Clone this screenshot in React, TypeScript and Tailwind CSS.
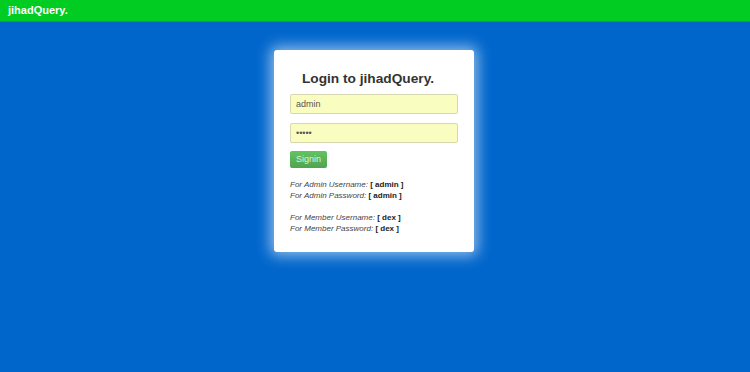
export default function App() {
  return (
    <div className="min-h-[372px] bg-[#0066cc] font-['Liberation_Sans',Arial,sans-serif]">
      <header className="flex h-[22px] items-center border-b border-[#1a9a3a] bg-[#00cc22] px-2">
        <span className="text-[11px] font-bold text-white">jihadQuery.</span>
      </header>

      <div className="flex justify-center pt-[28px] pr-[2px]">
        <div className="w-[200px] rounded-[3px] bg-white px-4 pb-[18px] pt-[20px] shadow-[0_0_14px_4px_rgba(255,255,255,0.55)]">
          <h1 className="pr-[12px] text-center text-[13.7px] font-bold leading-[17px] text-[#333]">
            Login to jihadQuery.
          </h1>
          <form className="mt-[7px] flex flex-col">
            <input
              type="text"
              defaultValue="admin"
              className="h-[20px] w-full rounded-[2px] border border-[#d8d8b0] bg-[#fafdc0] px-[5px] text-[9px] text-[#555] outline-none"
            />
            <input
              type="password"
              defaultValue="admin"
              className="mt-[9px] h-[20px] w-full rounded-[2px] border border-[#d8d8b0] bg-[#fafdc0] px-[5px] text-[9px] text-[#555] outline-none"
            />
            <button
              type="button"
              className="mt-[8px] h-[17px] w-[37px] rounded-[2px] bg-gradient-to-b from-[#62c462] to-[#51a351] text-[9px] text-[#dff0df]"
            >
              Signin
            </button>
          </form>
          <div className="mt-[11px] text-[8px] leading-[11px] text-[#444]">
            <p>
              <i>For Admin Username:</i> <b className="text-[#222]">[ admin ]</b>
            </p>
            <p>
              <i>For Admin Password:</i> <b className="text-[#222]">[ admin ]</b>
            </p>
            <p className="mt-[11px]">
              <i>For Member Username:</i> <b className="text-[#222]">[ dex ]</b>
            </p>
            <p>
              <i>For Member Password:</i> <b className="text-[#222]">[ dex ]</b>
            </p>
          </div>
        </div>
      </div>
    </div>
  );
}
